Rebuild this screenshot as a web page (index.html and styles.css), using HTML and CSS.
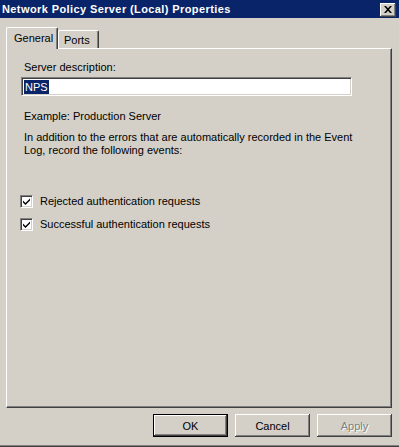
FILE: index.html
```html
<!DOCTYPE html>
<html lang="en">
<head>
  <meta charset="UTF-8" />
  <title>Network Policy Server (Local) Properties</title>
  <link rel="stylesheet" href="styles.css">
</head>
<body>
  <div class="window">
    <div class="titlebar">
      <span class="title">Network Policy Server (Local) Properties</span>
      <button class="close-btn" aria-label="Close">
        <svg width="8" height="7" viewBox="0 0 8 7">
          <path d="M0 0h2l2 2.2L6 0h2L5 3.5 8 7H6L4 4.8 2 7H0l3-3.5z" fill="#000"/>
        </svg>
      </button>
    </div>

    <div class="content">
      <div class="tabs">
        <div class="tab active">General</div>
        <div class="tab">Ports</div>
      </div>

      <div class="panel">
        <div class="label">Server description:</div>
        <div class="textbox"><span class="selected">NPS</span></div>
        <div class="hint">Example: Production Server</div>
        <p class="info">In addition to the errors that are automatically recorded in the Event Log, record the following events:</p>

        <div class="checks">
          <div class="check-row">
            <span class="checkbox">
              <svg width="7" height="7" viewBox="0 0 7 7"><path d="M0 2.5l2.5 2.5L7 0.5v2L2.5 7 0 4.5z" fill="#000"/></svg>
            </span>
            <span>Rejected authentication requests</span>
          </div>
          <div class="check-row">
            <span class="checkbox">
              <svg width="7" height="7" viewBox="0 0 7 7"><path d="M0 2.5l2.5 2.5L7 0.5v2L2.5 7 0 4.5z" fill="#000"/></svg>
            </span>
            <span>Successful authentication requests</span>
          </div>
        </div>
      </div>

      <div class="buttons">
        <button class="btn default">OK</button>
        <button class="btn">Cancel</button>
        <button class="btn disabled">Apply</button>
      </div>
    </div>
  </div>
</body>
</html>
```

FILE: styles.css
```css
body {
  margin: 0;
  background: #d4d0c8;
  font-family: "Liberation Sans", Arial, sans-serif;
  font-size: 11px;
  color: #000;
}

.window {
  height: 447px;
  box-sizing: border-box;
  display: flex;
  flex-direction: column;
  border-bottom: 1px solid #404040;
  box-shadow: inset 0 -1px 0 #808080;
}

.titlebar {
  height: 18px;
  background: #0a246a;
  color: #fff;
  display: flex;
  align-items: center;
  justify-content: space-between;
  padding: 0 3px 0 2px;
}

.title {
  font-weight: bold;
  font-size: 11px;
  letter-spacing: 0.4px;
}

.close-btn {
  width: 16px;
  height: 14px;
  padding: 0;
  margin-top: 1px;
  background: #d4d0c8;
  border: none;
  box-shadow: inset -1px -1px 0 #404040, inset 1px 1px 0 #fff, inset -2px -2px 0 #808080;
  display: flex;
  align-items: center;
  justify-content: center;
}

.content {
  flex: 1;
  display: flex;
  flex-direction: column;
  padding: 9px 7px 0 6px;
}

.tabs {
  height: 21px;
  display: flex;
  align-items: flex-end;
}

.tab {
  height: 18px;
  box-sizing: border-box;
  padding: 3px 6px 0 6px;
  border-top: 1px solid #fff;
  border-left: 1px solid #fff;
  border-right: 1px solid #404040;
  box-shadow: inset -1px 0 0 #808080;
  border-radius: 2px 2px 0 0;
}

.tab.active {
  height: 22px;
  width: 52px;
  padding: 4px 0 0 7px;
  margin-bottom: -1px;
  background: #d4d0c8;
  position: relative;
  z-index: 1;
}

.tab.active + .tab {
  width: 41px;
  padding-left: 5px;
}

.panel {
  height: 360px;
  box-sizing: border-box;
  border-top: 1px solid #fff;
  border-left: 1px solid #fff;
  border-right: 1px solid #404040;
  border-bottom: 1px solid #404040;
  box-shadow: inset -1px -1px 0 #808080;
  padding: 12px 0 0 13px;
  line-height: 13px;
}

.label {
  margin-left: 4px;
}

.textbox {
  width: 331px;
  height: 19px;
  box-sizing: border-box;
  margin: 3px 0 0 1px;
  background: #fff;
  border-top: 1px solid #808080;
  border-left: 1px solid #808080;
  border-right: 1px solid #fff;
  border-bottom: 1px solid #fff;
  box-shadow: inset 1px 1px 0 #404040, inset -1px -1px 0 #d4d0c8;
  padding: 2px 0 0 2px;
}

.selected {
  display: inline-block;
  background: #0a246a;
  color: #fff;
  line-height: 14px;
  padding: 0 1px;
}

.hint {
  margin: 14px 0 0 4px;
}

.info {
  margin: 8px 0 0 4px;
  width: 345px;
}

.checks {
  margin-top: 33px;
}

.check-row {
  height: 23px;
  display: flex;
  align-items: center;
  gap: 7px;
}

.checkbox {
  flex: none;
  width: 13px;
  height: 13px;
  box-sizing: border-box;
  background: #fff;
  border-top: 1px solid #808080;
  border-left: 1px solid #808080;
  border-right: 1px solid #fff;
  border-bottom: 1px solid #fff;
  box-shadow: inset 1px 1px 0 #404040, inset -1px -1px 0 #d4d0c8;
  display: flex;
  align-items: center;
  justify-content: center;
}

.buttons {
  display: flex;
  justify-content: flex-end;
  gap: 7px;
  margin-top: 6px;
}

.btn {
  width: 75px;
  height: 23px;
  padding: 0;
  font-family: "Liberation Sans", Arial, sans-serif;
  font-size: 11px;
  background: #d4d0c8;
  color: #000;
  border: none;
  box-shadow: inset -1px -1px 0 #404040, inset 1px 1px 0 #fff, inset -2px -2px 0 #808080;
}

.btn.default {
  box-shadow: inset 0 0 0 1px #000, inset -2px -2px 0 #404040, inset 2px 2px 0 #fff, inset -3px -3px 0 #808080;
}

.btn.disabled {
  color: #808080;
  text-shadow: 1px 1px 0 #fff;
}
```
